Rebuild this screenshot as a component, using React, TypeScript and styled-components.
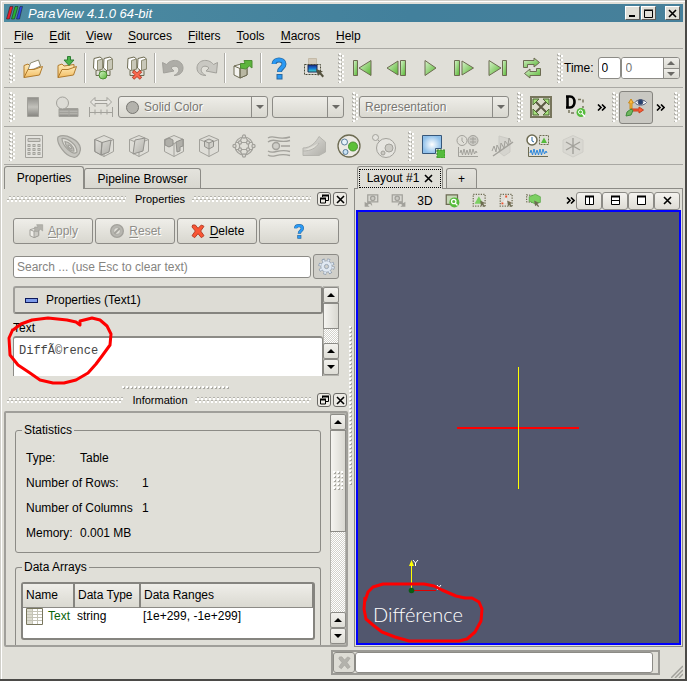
import React from 'react';
import styled, { createGlobalStyle, css } from 'styled-components';

const BG = '#e0dfd8';
const LINE = '#8c8b86';
const OLIVE = '#6d6b52';
const GREY = '#a2a19b';
const PALE = '#cbcac4';

const Global = createGlobalStyle`
  * { box-sizing: border-box; }
  body { margin: 0; background: ${BG}; }
  body, button, input, select, textarea, table {
    font-family: "Liberation Sans", Arial, sans-serif;
    font-size: 12px;
    color: #000;
  }
  button, input, select, textarea { margin: 0; padding: 0; border-radius: 0; }
`;

/* ---------- window frame ---------- */

const Window = styled.div`
  position: relative;
  display: flex;
  flex-direction: column;
  min-height: 100vh;
  padding: 4px 2px 0 4px;
  background: ${BG};
  border-right: 2px solid #4b4a47;
  border-bottom: 2px solid #4b4a47;
  box-shadow: inset 1px 1px 0 #d0cfc9, inset 2px 2px 0 #fff;
`;

const TitleBar = styled.header`
  display: flex;
  align-items: center;
  gap: 5px;
  height: 18px;
  padding: 0 3px 0 2px;
  background: linear-gradient(90deg, #4d8ba1, #42809c 60%, #47809a);
`;

const Title = styled.h1`
  flex: 1;
  margin: 0;
  font-size: 13px;
  font-weight: 400;
  font-style: italic;
  color: #fff;
  white-space: nowrap;
`;

const FrameButtons = styled.div`
  display: flex;
  gap: 1px;
  & > :last-child { margin-left: 8px; }
`;

const FrameButton = styled.button`
  width: 15px;
  height: 14px;
  display: grid;
  place-items: center;
  background: ${BG};
  border: 1px solid;
  border-color: #fff #5c5b57 #5c5b57 #fff;
`;

const MenuBar = styled.nav`
  display: flex;
  align-items: center;
  gap: 16px;
  height: 27px;
  padding: 2px 0 0 10px;
  border-bottom: 1px solid #a9a8a3;
`;

const MenuItem = styled.button`
  border: 0;
  background: none;
`;

const Mnemonic = styled.span`
  text-decoration: underline;
  text-underline-offset: 2px;
`;

/* ---------- toolbars ---------- */

const Toolbar = styled.div<{ $h?: number }>`
  display: flex;
  align-items: center;
  height: ${(p) => p.$h ?? 39}px;
  padding-left: 5px;
  border-bottom: 1px solid #a9a8a3;
  overflow: hidden;
`;

const dots = css`
  background-image:
    radial-gradient(circle at 1px 1px, #fff 1px, transparent 1px),
    radial-gradient(circle at 2px 2px, #a9a8a2 1px, transparent 1px);
  background-size: 4px 4px;
`;

const Grip = styled.span<{ $gap?: number }>`
  flex: none;
  width: 6px;
  height: 30px;
  margin-left: ${(p) => p.$gap ?? 0}px;
  margin-right: 1px;
  background-image:
    radial-gradient(circle at 2px 1px, #fff 1px, transparent 1px),
    radial-gradient(circle at 1px 2px, #b3b2ac 1px, transparent 1px),
    radial-gradient(circle at 5px 3px, #fff 1px, transparent 1px),
    radial-gradient(circle at 4px 3px, #b3b2ac 1px, transparent 1px);
  background-size: 6px 4px;
`;

const Divider = styled.span`
  width: 2px;
  height: 30px;
  background: linear-gradient(90deg, #aeada7 50%, #fff 50%);
`;

const ToolButton = styled.button<{ $w?: number; $pressed?: boolean }>`
  flex: none;
  display: grid;
  place-items: center;
  width: ${(p) => p.$w ?? 34}px;
  height: 33px;
  border: 0;
  background: none;
  ${(p) =>
    p.$pressed &&
    css`
      background: #c9c8c2;
      border: 1px solid #85847f;
      border-radius: 3px;
    `}
`;

const More = styled.button<{ $w: number }>`
  flex: none;
  display: grid;
  place-items: center;
  width: ${(p) => p.$w}px;
  border: 0;
  background: none;
`;

const ComboBox = styled.div<{ $w: number; $gap?: number }>`
  flex: 0 1 ${(p) => p.$w}px;
  height: 22px;
  margin-left: ${(p) => p.$gap ?? 0}px;
  border: 1px solid ${LINE};
  border-radius: 3px;
  background: linear-gradient(#eeede8, #d9d8d0);
  display: flex;
  align-items: center;
`;

const Select = styled.select<{ $pad: number }>`
  flex: 1;
  min-width: 0;
  height: 20px;
  padding-left: ${(p) => p.$pad}px;
  appearance: none;
  border: 0;
  background: none;
  opacity: 1;
  color: #777671;
  text-shadow: 1px 1px 0 #fff;
`;

const ComboArrow = styled.span`
  width: 16px;
  height: 20px;
  display: grid;
  place-items: center;
  border-left: 1px solid ${LINE};
`;

const ComboDot = styled.span`
  width: 13px;
  height: 13px;
  margin-left: 7px;
  border: 1px solid #777671;
  border-radius: 50%;
  background: #b3b2ac;
`;

const TimeLabel = styled.label`
  display: flex;
  align-items: center;
  gap: 4px;
`;

const field = css`
  border: 1px solid ${LINE};
  border-radius: 3px;
  background: #fff;
`;

const TimeInput = styled.input`
  ${field}
  width: 23px;
  height: 22px;
  padding-left: 3px;
`;

const SpinBox = styled.div`
  ${field}
  display: flex;
  width: 59px;
  height: 22px;
  overflow: hidden;
`;

const SpinInput = styled.input`
  flex: 1;
  min-width: 0;
  padding-left: 4px;
  border: 0;
  color: #777671;
  background: #fff;
`;

const SpinButtons = styled.div`
  width: 16px;
  display: grid;
  grid-template-rows: 1fr 1fr;
  border-left: 1px solid ${LINE};
`;

const SpinButton = styled.button`
  display: grid;
  place-items: center;
  border: 0;
  background: linear-gradient(#efeee9, #dbdad3);
  & + & { border-top: 1px solid ${LINE}; }
`;

/* ---------- body columns ---------- */

const Body = styled.main`
  flex: 1;
  display: grid;
  grid-template-columns: minmax(0, 344fr) 6px minmax(0, 329fr);
`;

const Column = styled.section`
  display: flex;
  flex-direction: column;
  min-width: 0;
`;

const ColumnSplitter = styled.div`
  align-self: center;
  justify-self: center;
  width: 4px;
  height: 160px;
  ${dots}
`;

const Tabs = styled.div`
  display: flex;
  align-items: flex-end;
  height: 24px;
  border-bottom: 1px solid ${LINE};
`;

const Tab = styled.button<{ $active?: boolean; $w: number }>`
  width: ${(p) => p.$w}px;
  height: ${(p) => (p.$active ? 23 : 20)}px;
  margin-bottom: ${(p) => (p.$active ? -1 : 0)}px;
  display: flex;
  align-items: center;
  justify-content: center;
  gap: 5px;
  border: 1px solid ${LINE};
  border-bottom: 0;
  border-radius: 3px 3px 0 0;
  background: ${(p) => (p.$active ? BG : 'linear-gradient(#e4e3dd, #d8d7d0)')};
  white-space: nowrap;
`;

const DockTitle = styled.div`
  display: flex;
  align-items: center;
  gap: 2px;
  height: 20px;
  padding: 0 1px 0 3px;
`;

const DockDots = styled.span`
  flex: 1;
  height: 6px;
  margin-right: 4px;
  background-image:
    radial-gradient(circle at 3px 2px, #fff 1px, transparent 1px),
    radial-gradient(circle at 3px 1px, #b3b2ac 1px, transparent 1px),
    radial-gradient(circle at 1px 5px, #fff 1px, transparent 1px),
    radial-gradient(circle at 1px 4px, #b3b2ac 1px, transparent 1px);
  background-size: 4px 6px;
`;

const DockName = styled.h2`
  margin: 0 5px 0 3px;
  font-size: 11px;
  font-weight: 400;
`;

const DockButton = styled.button`
  width: 14px;
  height: 14px;
  display: grid;
  place-items: center;
  border: 1px solid #6b6a66;
  border-radius: 3px;
  background: #eceae4;
`;

const PropertyPane = styled.div`
  position: relative;
  padding: 9px 9px 0;
`;

const ButtonRow = styled.div`
  display: grid;
  grid-template-columns: repeat(4, 1fr);
  gap: 2px;
`;

const PushButton = styled.button`
  display: flex;
  align-items: center;
  justify-content: center;
  gap: 4px;
  height: 26px;
  border: 1px solid ${LINE};
  border-radius: 3px;
  background: linear-gradient(#efeee9, #d8d7cf);
  &:disabled {
    color: #8f8e89;
    text-shadow: 1px 1px 0 #fff;
  }
`;

const SearchRow = styled.div`
  display: flex;
  align-items: center;
  gap: 2px;
  margin: 10px 0 7px;
`;

const SearchInput = styled.input`
  ${field}
  flex: 1;
  min-width: 0;
  height: 22px;
  padding-left: 3px;
  &::placeholder { color: #85847f; opacity: 1; }
`;

const GearButton = styled.button`
  display: grid;
  place-items: center;
  width: 26px;
  height: 25px;
  border: 1px solid ${LINE};
  border-radius: 3px;
  background: #d0cfc9;
`;

const ScrollArea = styled.div`
  display: flex;
  height: 90px;
`;

const ScrollContent = styled.div`
  flex: 1;
  min-width: 0;
  overflow: hidden;
`;

const GroupHeader = styled.button`
  display: flex;
  align-items: center;
  gap: 8px;
  width: 100%;
  height: 28px;
  padding-left: 10px;
  border: 2px solid;
  border-color: #a09f9a #85847f #85847f #a09f9a;
  border-radius: 3px;
  background: #dddcd5;
`;

const CollapseMark = styled.span`
  width: 13px;
  height: 5px;
  border: 1px solid #0e1a5c;
  background: #7d9bea;
`;

const TextLabel = styled.label`
  display: block;
  height: 22px;
  padding-top: 7px;
  line-height: 14px;
`;

const TextArea = styled.textarea`
  display: block;
  width: 100%;
  height: 70px;
  padding: 6px 5px;
  border: 1px solid ${LINE};
  border-top-width: 2px;
  border-radius: 3px;
  background: #fff;
  color: #444;
  resize: none;
  font-family: "Liberation Mono", monospace;
  overflow: hidden;
`;

const Bar = styled.div`
  flex: none;
  display: flex;
  flex-direction: column;
  width: 16px;
  border: 1px solid #b5b4ae;
  background: repeating-conic-gradient(#fff 0 25%, #d3d2cb 0 50%) 0 0 / 2px 2px;
`;

const BarButton = styled.button`
  height: 16px;
  display: grid;
  place-items: center;
  margin: 0 -1px;
  border: 1px solid ${LINE};
  border-radius: 2px;
  background: linear-gradient(#f2f1ed, #deddd6);
`;

const Thumb = styled.div<{ $h: number }>`
  display: grid;
  place-items: center;
  height: ${(p) => p.$h}px;
  margin: 0 -1px auto;
  border: 1px solid ${LINE};
  background: linear-gradient(90deg, #f5f4f0, #d9d8d1);
`;

const ThumbDots = styled.span`
  width: 10px;
  height: 20px;
  ${dots}
`;

const RowSplitter = styled.div`
  width: 108px;
  height: 4px;
  margin: 10px auto 0;
  ${dots}
`;

const InfoFrame = styled.div`
  flex: 1;
  display: flex;
  margin-top: 1px;
  border: 2px solid #a09f9a;
  border-radius: 2px;
`;

const InfoContent = styled.div`
  flex: 1;
  display: flex;
  flex-direction: column;
  gap: 7px;
  min-width: 0;
  padding: 10px 9px 0;
`;

const Group = styled.fieldset<{ $open?: boolean }>`
  min-width: 0;
  margin: 0;
  border: 1px solid ${LINE};
  border-radius: 3px;
  padding: ${(p) => (p.$open ? '8px 5px 5px' : '9px 10px 6px')};
  ${(p) => p.$open && css`flex: 1; border-bottom: 0; border-radius: 3px 3px 0 0;`}
`;

const Legend = styled.legend<{ $shift?: number }>`
  height: 14px;
  padding: 0 2px;
  margin-left: ${(p) => p.$shift ?? 0}px;
  line-height: 14px;
`;

const Stats = styled.dl`
  margin: 0;
`;

const StatRow = styled.div<{ $label: number }>`
  display: grid;
  grid-template-columns: ${(p) => p.$label}px 1fr;
  line-height: 25px;
  white-space: nowrap;
  dd { margin: 0; }
`;

const TableFrame = styled.div`
  height: 58px;
  border: 2px solid #85847f;
  border-radius: 3px;
  background: #fff;
`;

const Table = styled.table`
  width: 100%;
  border-collapse: collapse;
  table-layout: fixed;
  th {
    height: 23px;
    padding: 0 4px 0 3px;
    text-align: left;
    font-weight: 400;
    border-right: 2px solid #85847f;
    border-bottom: 1px solid ${LINE};
    background: linear-gradient(#efeee9, #dad9d1);
    white-space: nowrap;
  }
  th:last-child { border-right-width: 1px; }
  td { height: 17px; padding: 0 3px; white-space: nowrap; }
`;

const Col = styled.col<{ $w?: number }>`
  width: ${(p) => (p.$w ? `${p.$w}px` : 'auto')};
`;

const ArrayName = styled.span`
  display: flex;
  align-items: center;
  gap: 5px;
  color: #0a640a;
`;

/* ---------- render view ---------- */

const ViewTabs = styled(Tabs)`
  padding-left: 3px;
  gap: 3px;
`;

const FocusRing = styled.span`
  display: flex;
  align-items: center;
  gap: 5px;
  height: 19px;
  padding: 0 7px;
  border: 1px dotted #000;
`;

const ViewFrame = styled.div`
  flex: 1;
  display: flex;
  flex-direction: column;
  border: 1px solid ${LINE};
  border-top: 0;
  padding: 0 1px 1px;
`;

const ViewToolbar = styled.div`
  display: flex;
  align-items: center;
  height: 21px;
  padding: 2px 1px 0 0;
`;

const ViewTool = styled.button`
  flex: none;
  display: grid;
  place-items: center;
  width: 26px;
  height: 18px;
  border: 0;
  background: none;
`;

const ViewTools = styled.div`
  flex: 1;
  display: flex;
  gap: 1px;
  padding-left: 2px;
  overflow: hidden;
`;

const ViewButton = styled(ViewTool)`
  border: 1px solid ${LINE};
  border-radius: 3px;
  background: linear-gradient(#f4f3ef, #dedcd5);
`;

const Scene = styled.div`
  position: relative;
  flex: 1;
  border: 2px solid #0000fe;
  background: #52576e;
`;

const Cross = styled.svg`
  position: absolute;
  left: calc(50% - 62px);
  top: calc(50% - 61px);
`;

const Triad = styled.svg`
  position: absolute;
  left: 48px;
  bottom: 46px;
`;

const SceneText = styled.span`
  position: absolute;
  left: 15px;
  bottom: 17px;
  font-family: Lato, sans-serif;
  font-weight: 300;
  font-size: 20px;
  line-height: 24px;
  color: #fff;
`;

const SceneMark = styled.svg`
  position: absolute;
  left: 3px;
  bottom: -2px;
`;

const PaneMark = styled.svg`
  position: absolute;
  left: 0;
  top: 105px;
  pointer-events: none;
`;

/* ---------- status bar ---------- */

const StatusBar = styled.footer`
  display: flex;
  align-items: center;
  height: 32px;
  padding-bottom: 1px;
`;

const StatusBox = styled.div`
  flex: 1;
  display: flex;
  height: 25px;
  margin-left: 327px;
  padding: 0 5px 0 0;
  border: 2px solid #9b9a95;
`;

const StatusButton = styled.button`
  display: grid;
  place-items: center;
  width: 22px;
  border: 1px solid ${LINE};
  border-radius: 3px;
  background: #dddcd5;
`;

const StatusInput = styled.input`
  flex: 1;
  min-width: 0;
  border: 1px solid ${LINE};
  border-radius: 3px;
  background: #fff;
`;

const SizeGrip = styled.svg`
  align-self: flex-end;
  margin-left: 11px;
`;

/* ---------- drawings ---------- */

type IconProps = { children: React.ReactNode; size?: number };

const Icon = ({ children, size = 24 }: IconProps) => (
  <svg width={size} height={size} viewBox="0 0 24 24" fill="none" stroke={OLIVE} strokeWidth="1" aria-hidden="true">
    {children}
  </svg>
);

const Defs = styled.svg`
  position: absolute;
  width: 0;
  height: 0;
`;

const Gradients = () => (
  <Defs aria-hidden="true">
    <defs>
      <linearGradient id="green" x1="0" y1="0" x2="1" y2="1">
        <stop offset="0" stopColor="#d9f3cd" />
        <stop offset="1" stopColor="#55b52f" />
      </linearGradient>
      <linearGradient id="folder" x1="0" y1="0" x2="0" y2="1">
        <stop offset="0" stopColor="#fdeab8" />
        <stop offset="1" stopColor="#f3bd62" />
      </linearGradient>
      <linearGradient id="grey" x1="0" y1="0" x2="1" y2="1">
        <stop offset="0" stopColor="#e2e1dc" />
        <stop offset="1" stopColor="#b0afa9" />
      </linearGradient>
      <linearGradient id="map" x1="0" y1="0" x2="0" y2="1">
        <stop offset="0" stopColor="#8f8e89" />
        <stop offset="0.5" stopColor="#c2c1bb" />
        <stop offset="1" stopColor="#85847f" />
      </linearGradient>
      <radialGradient id="sky">
        <stop offset="0" stopColor="#fff" />
        <stop offset="1" stopColor="#8fc0ea" />
      </radialGradient>
      <linearGradient id="sea" x1="0" y1="0" x2="0" y2="1">
        <stop offset="0" stopColor="#1b2a8a" />
        <stop offset="0.5" stopColor="#1677d0" />
        <stop offset="1" stopColor="#3fe0c8" />
      </linearGradient>
    </defs>
  </Defs>
);

const folderBack = <path d="M3 21.500V9.500L7 8L9 10L19 8.500V13" fill="url(#folder)" stroke="#b07a2c" />;
const folderFront = <path d="M3 21.500L7 13.500L13 13.500L21.500 10.500L18.500 19Z" fill="url(#folder)" stroke="#b07a2c" />;

const servers = (
  <>
    <path d="M3 2.500L9 1L11.500 3V13L5 14.500L2.500 12Z" fill="#fff" />
    <path d="M6.500 4.500L11.500 3V13L6.500 14.500Z" fill="#c9c8b8" stroke="#8d8b72" />
    <path d="M13 2.500L19 1L21.500 3V13L15.500 14.500L12.500 12Z" fill="#fff" />
    <path d="M16.500 4.500L21.500 3V13L16.500 14.500Z" fill="#c9c8b8" stroke="#8d8b72" />
    <path d="M5 14.500V19.500H9M19 14.500V19.500H15M9 14V17M15.500 14V17" />
  </>
);

const cube = (
  <path d="M12 1.500L21.500 5.500V17.500L12 22.500L2.500 17.500V5.500ZM2.500 5.500L12 9.500L21.500 5.500M12 9.500V22.500" stroke={GREY} fill="#deddd7" />
);

const wave = (colour: string) => (
  <path d="M4 19L5 16L6.500 21L8 15L9.500 21L11 16L12.500 21L14 15L15.500 21L17 15L18.500 20L20 17L21 19" stroke={colour} />
);

const Cursor = () => <path d="M13 12L21 16L18 17L21 21L19.500 22.500L16.500 19L14.500 21Z" fill={OLIVE} stroke="none" />;

const crossShape = 'M4 3L8 3L12 8L17 3L21 5L16 12L21 19L17 22L12 16L7 22L3 19L8 12L3 6Z';

const icons = {
  open: (
    <>
      {folderBack}
      <path d="M7 14L9.500 7L17.500 4L19.500 10L13 13Z" fill="#fff" stroke="#8d8b72" />
      {folderFront}
    </>
  ),
  save: (
    <>
      {folderBack}
      {folderFront}
      <path d="M12.500 0.500H15.500V4H19L14 9.500L9 4H12.500Z" fill="#4cb34a" stroke="#2f7f35" />
    </>
  ),
  connect: (
    <>
      {servers}
      <circle cx="12" cy="19" r="4" fill="url(#green)" stroke="#4c8f33" />
    </>
  ),
  disconnect: (
    <>
      {servers}
      <path d="M8 15L16 22.500M16 15L8 22.500" stroke="#b3402a" strokeWidth="3.400" />
      <path d="M8.500 15.500L15.500 22M15.500 15.500L8.500 22" stroke="#fb6a50" strokeWidth="2" />
    </>
  ),
  undo: <path d="M1.500 6.500L5.500 8.500C11 1.500 22 4 22 12C22 17 18 19.500 13 19.500C17 17.500 18.500 15 17.500 12.500C16.500 9.500 12 9.500 10 12L13 15L2.500 17Z" fill="#aeada7" stroke={GREY} />,
  redo: <path d="M22.500 6.500L18.500 8.500C13 1.500 2 4 2 12C2 17 6 19.500 11 19.500C7 17.500 5.500 15 6.500 12.500C7.500 9.500 12 9.500 14 12L11 15L21.500 17Z" fill="#c9c8c2" stroke={GREY} />,
  apply: (
    <>
      <path d="M3 10L10 8L16 10V19L9 22L3 19Z" fill="#f4f3ef" />
      <path d="M9 12.500L16 10V19L9 22Z" fill="#b9b7a2" />
      <path d="M3 10L9 12.500V22" />
      <path d="M9.500 12V7.500H14L13 4.500H21V12L18.500 10L14.500 13Z" fill="#5cb43c" stroke="#4c8f33" />
    </>
  ),
  applyOff: (
    <>
      <path d="M3 10L10 8L16 10V19L9 22L3 19Z" fill="#efeee9" stroke={GREY} strokeWidth="1.500" />
      <path d="M9 12.500L16 10V19L9 22ZM3 10L9 12.500" fill={PALE} stroke={GREY} strokeWidth="1.500" />
      <path d="M10 12V6H15L13 2.500H22V12L19 9.500L14 13Z" fill="#b3b2ac" stroke={GREY} />
    </>
  ),
  help: (
    <>
      <path d="M7 8C7 2.500 17 2.500 17 8C17 12 12.500 11.500 12.500 16" stroke="#29699f" strokeWidth="5" />
      <path d="M7 8C7 2.500 17 2.500 17 8C17 12 12.500 11.500 12.500 15.500" stroke="#2a99f4" strokeWidth="3.400" />
      <rect x="10" y="18.500" width="5" height="4.500" fill="#2a99f4" stroke="#29699f" />
    </>
  ),
  colormap: (
    <>
      <path d="M7.500 2.500H15.500V9H7.500Z" fill="#d5cab9" stroke="#c4bba8" />
      <path d="M7 9H16V16H7Z" fill="url(#sea)" stroke="#1b2a5a" />
      <path d="M3.500 8.500H19.500V18.500H3.500Z" strokeDasharray="2 1" stroke="#4b4a3a" />
      <path d="M15 13L22 15.500L20 16.500L23 20L21.500 21.500L18.500 18L17 20Z" fill="#55533f" stroke="none" />
    </>
  ),
  first: (
    <>
      <path d="M3.500 4.500H7.500V19.500H3.500Z" fill="url(#green)" />
      <path d="M21 4.500V19.500L9 12Z" fill="url(#green)" />
    </>
  ),
  prev: (
    <>
      <path d="M14 5V19L3 12Z" fill="url(#green)" />
      <path d="M16.500 4.500H21.500V19.500H16.500Z" fill="url(#green)" />
    </>
  ),
  play: <path d="M7 4.500V19.500L18 12Z" fill="url(#green)" />,
  next: (
    <>
      <path d="M2.500 4.500H7.500V19.500H2.500Z" fill="url(#green)" />
      <path d="M10 5V19L21.500 12Z" fill="url(#green)" />
    </>
  ),
  last: (
    <>
      <path d="M3 4.500V19.500L15 12Z" fill="url(#green)" />
      <path d="M16.500 4.500H20.500V19.500H16.500Z" fill="url(#green)" />
    </>
  ),
  loop: (
    <>
      <path d="M3.500 11.500V4.500H14V2L19.500 6.500L14 11V8.500H7.500V11.500Z" fill="url(#green)" />
      <path d="M20.500 12.500V19.500H10V22L4.500 17.500L10 13V15.500H16.500V12.500Z" fill="url(#green)" />
    </>
  ),
  palette: <path d="M6.500 2.500H17.500V21.500H6.500Z" fill="url(#map)" stroke={GREY} />,
  edit: (
    <>
      <path d="M4 13.500H23V21.500H4Z" fill="url(#map)" stroke={GREY} />
      <path d="M4 17.500H23M14 13.500V21.500" stroke={GREY} />
      <circle cx="7.500" cy="8" r="6" fill="#dddcd6" stroke={GREY} />
    </>
  ),
  rescale: (
    <>
      <path d="M1.500 7L6 2.500V5.500H18V2.500L22.500 7L18 11.500V8.500H6V11.500Z" stroke={GREY} fill="#e7e6e1" />
      <path d="M0.500 12V22M23.500 12V22M0.500 17.500H23.500M6 14.500V19.500M12 14.500V19.500M18 14.500V19.500" stroke={GREY} />
    </>
  ),
  resetCamera: (
    <>
      <path d="M2 2H22V22H2Z" stroke="#77755c" strokeWidth="2" fill="#dcdbcc" />
      <path d="M5 5L19 19M19 5L5 19" stroke="#5c5a44" strokeWidth="2" />
      <path d="M4 4H10L4 10ZM20 4V10L14 4ZM4 20V14L10 20ZM20 20H14L20 14Z" fill="#a5e07d" stroke="#4f6b34" />
    </>
  ),
  zoomData: (
    <>
      <path d="M3 1.500H7C13 1.500 13 12.500 7 12.500H3M4.500 1.500V12.500" stroke="#000" strokeWidth="2.600" />
      <path d="M15 4.500H20V8M6 15V18H12M20 11V13" stroke="#77755c" strokeWidth="1.500" strokeDasharray="3 2" />
      <circle cx="18" cy="17.500" r="4.500" fill="#55bb3c" stroke="none" />
      <circle cx="17.500" cy="17" r="2" stroke="#fff" />
      <path d="M19 18.500L22 21.500" stroke="#fff" strokeWidth="1.500" />
    </>
  ),
  axes: (
    <>
      <path d="M6 14V8H4.500L7 4L9.500 8H8V14Z" fill="#fbb83c" stroke="#c98a1c" />
      <path d="M7 14H15V12L19.500 15L15 18V16H7Z" fill="#fb5a34" stroke="#c8401e" />
      <path d="M7 14L3 17L2 21L7 20L9 15.500Z" fill="#6fb65e" stroke="#3f8a3c" />
      <path d="M11 7.500C13 4 20 4 22.500 7.500C20 11 13 11 11 7.500Z" fill="#fff" stroke="#4b5878" />
      <circle cx="16.500" cy="7" r="2.500" fill="#26406e" stroke="#4b5878" />
    </>
  ),
  calculator: (
    <g stroke={GREY}>
      <path d="M3.500 1.500H20.500V23.500H3.500Z" fill="#e3e2dd" />
      <path d="M6 4.500H18V7.500H6Z" fill="#d0cfc9" />
      {[11, 15, 19].map((y) => [6, 11, 16].map((x) => <rect key={`${x}-${y}`} x={x} y={y - 0.5} width="2" height="2" fill="#c4c3bd" />))}
    </g>
  ),
  contour: (
    <g stroke={GREY} strokeWidth="1.200">
      <path d="M1 3C8 -1 23 6 23.500 15C23 22 18 24 16 23C8 22 -1 9 1 3Z" fill="#c6c5bf" />
      <path d="M5 4.500C10 4 20 10 20 18C16 22 5 12 5 4.500Z" fill="#e0dfd9" />
      <path d="M8 7.500C12 8 17 12 17 17C14 18 8 12 8 7.500Z" fill="#c6c5bf" />
      <path d="M11 11C13 11 15 13 15 15C13 15 11 13 11 11Z" fill="#e6e5e0" />
    </g>
  ),
  clip: (
    <>
      {cube}
      <path d="M3 5.500L10 8.500L9 21L3 17.500ZM10 8.500L19 6L17 18L9 21Z" fill="url(#grey)" stroke="#92918c" />
    </>
  ),
  slice: (
    <>
      {cube}
      <path d="M8 6L18 4L16 17L6 20Z" fill="url(#grey)" stroke="#92918c" />
    </>
  ),
  threshold: (
    <>
      {cube}
      <path d="M3 6L7 4L11 6V11L7 13L3 11ZM14 8L21 5V12L18 13V17L15 18Z" fill="#b0afa9" stroke="#92918c" />
    </>
  ),
  extract: (
    <>
      {cube}
      <path d="M7.500 7L12 5L16.500 7V12.500L12 15L7.500 12.500ZM7.500 7L12 9L16.500 7M12 9V15" fill="#cfcec8" stroke="#92918c" />
    </>
  ),
  glyph: (
    <g stroke={GREY} strokeWidth="1.200">
      <circle cx="12" cy="12" r="9" />
      <ellipse cx="12" cy="12" rx="4.500" ry="9" />
      <path d="M4 8.500H20M4 15.500H20" />
      {[[12, 2.5], [12, 21.5], [2.5, 12], [21.5, 12], [8, 8.5], [16, 8.5], [8, 15.5], [16, 15.5]].map(([x, y]) => (
        <circle key={`${x}-${y}`} cx={x} cy={y} r="1.600" fill="#dddcd6" />
      ))}
    </g>
  ),
  stream: (
    <g stroke={GREY} strokeWidth="1.400">
      <path d="M1 4C7 0 10 7 23 3M1 8C7 3 11 10 23 6.500M1 17C7 21 11 14 23 17.500M1 21C7 25 10 18 23 21.500M14 12H23" />
      <circle cx="9" cy="12" r="3.500" fill="#cfcec8" />
    </g>
  ),
  warp: <path d="M1 14C9 14 14 8 17 2.500L23.500 8V18L17 21.500H1ZM1 17C9 17 14 14 17 9" fill="url(#grey)" stroke="#b5b4ae" />,
  group: (
    <>
      <circle cx="12" cy="12" r="11" fill="#eceae4" strokeWidth="1.300" />
      <circle cx="16" cy="12.500" r="4.500" fill="#5cc038" stroke="#4c8f33" />
      <circle cx="7.500" cy="8" r="3" fill="#e6f1fa" stroke="#5c7f9b" />
      <circle cx="8.500" cy="18" r="2.500" fill="#c9e2f5" stroke="#5c7f9b" />
    </>
  ),
  ungroup: (
    <g stroke={GREY}>
      <circle cx="14" cy="14" r="9.500" fill="#e5e4df" />
      <circle cx="17" cy="14" r="4" fill={PALE} />
      <circle cx="11" cy="19" r="2" fill={PALE} />
      <circle cx="3.500" cy="3.500" r="3" fill="#e5e4df" />
      <path d="M6 6L8 8" />
    </g>
  ),
  selectView: (
    <>
      <path d="M1.500 1.500H20.500V14.500H14.500V19.500H1.500Z" fill="url(#sky)" stroke="#37577a" />
      <path d="M16 16H24V24H16Z" fill="#55bb3c" stroke="#3d8a2a" strokeDasharray="2 1" />
    </>
  ),
  timePlot: (
    <g stroke={GREY}>
      <circle cx="6" cy="6.500" r="5" />
      <path d="M6 3.500V7L8 9M2.500 13V22.500H22" />
      <circle cx="17" cy="6.500" r="5" fill={PALE} />
      <path d="M14 5H20M14 8H20M17 3V10" />
      {wave(GREY)}
    </g>
  ),
  linePlot: (
    <g stroke={GREY}>
      <path d="M8 2L19 5V18L13 22L8 18Z" fill="#d5d4ce" stroke={PALE} />
      <path d="M2 22L22 8" strokeWidth="1.500" />
      <path d="M1 17L3 12L5 18L6 11L9 17L10 9L13 14L14 7L17 11L18 4L20 8" />
    </g>
  ),
  selectionPlot: (
    <>
      <circle cx="6" cy="6" r="5" fill="#fff" strokeWidth="1.500" />
      <path d="M6 3V7L8 8" stroke="#29699f" />
      <path d="M13.500 1.500H22.500V10.500H13.500Z" strokeDasharray="2 1" />
      <path d="M18 3.500L21 9H15Z" fill="#55bb3c" stroke="none" />
      {wave('#2a86dc')}
      <path d="M2.500 13V22.500H22" />
    </>
  ),
  snow: (
    <g stroke="#b5b4ae">
      <path d="M12 1.500L22 6V18L12 23L2 18V6Z" fill="#d9d8d2" stroke="#cfcec8" />
      <path d="M12 4V20M5 8L19 16M19 8L5 16" strokeWidth="1.400" stroke={GREY} />
    </g>
  ),
  cameraBack: (
    <g stroke={GREY} strokeWidth="2">
      <path d="M6 3H22V14H6Z" fill="#d9d8d2" />
      <circle cx="14" cy="8.500" r="3.500" fill={PALE} />
      <path d="M1 22V14L4 16C8 12 14 15 13 21C11 17 8 17 6 19L9 22Z" fill={GREY} stroke="none" />
    </g>
  ),
  cameraNext: (
    <g stroke={GREY} strokeWidth="2">
      <path d="M2 3H18V14H2Z" fill="#d9d8d2" />
      <circle cx="10" cy="8.500" r="3.500" fill={PALE} />
      <path d="M23 22V14L20 16C16 12 10 15 11 21C13 17 16 17 18 19L15 22Z" fill={GREY} stroke="none" />
    </g>
  ),
  zoomBox: (
    <>
      <path d="M2 3H20V18H2Z" fill="#c7d8b8" strokeWidth="2" />
      <circle cx="15" cy="15" r="8" fill="#55bb3c" stroke="none" />
      <circle cx="14" cy="13.500" r="3.500" stroke="#fff" strokeWidth="2" />
      <path d="M16 16L20 20" stroke="#fff" strokeWidth="2" />
    </>
  ),
  selectCells: (
    <>
      <path d="M2 2H21V21H2Z" strokeDasharray="2 2" strokeWidth="2" />
      <path d="M11 5L18 17H4Z" fill="#7ccf62" stroke="none" />
      <Cursor />
    </>
  ),
  selectPoints: (
    <>
      <path d="M2 2H21V21H2Z" strokeDasharray="2 2" strokeWidth="2" />
      <path d="M11 6L18 17H4Z" fill="#eceae4" stroke="#d5d4ce" />
      <path d="M10 4H13V7H10ZM4 15H7V18H4ZM15 14H18V17H15Z" fill="#f0522f" stroke="none" />
      <Cursor />
    </>
  ),
  selectFrustum: (
    <>
      <path d="M1 3L20 5V16L1 14Z" strokeDasharray="2 2" strokeWidth="2" />
      <path d="M5 6L15 2L23 6V15L14 17L5 13Z" fill="#7ccf62" stroke="#4c9f3b" />
      <Cursor />
    </>
  ),
  reset: (
    <>
      <circle cx="12" cy="12" r="9.500" fill="#b7b6b0" stroke={GREY} strokeWidth="2" />
      <circle cx="12" cy="12" r="5" fill="#e0dfd9" stroke={GREY} />
      <path d="M8 16L16 8" stroke={GREY} strokeWidth="3" />
    </>
  ),
  remove: <path d={crossShape} fill="#fa5534" stroke="#b5402a" strokeWidth="1.500" />,
  removeOff: <path d={crossShape} fill="#b3b2ac" stroke={GREY} />,
  gear: (
    <>
      <circle cx="12" cy="12" r="9" stroke="#8595a8" strokeWidth="5" strokeDasharray="3.600 3.470" />
      <circle cx="12" cy="12" r="8" fill="#e1e9f2" stroke="#8595a8" />
      <circle cx="12" cy="12" r="9" stroke="#e1e9f2" strokeWidth="3" strokeDasharray="2.600 4.470" strokeDashoffset="-0.500" />
      <circle cx="12" cy="12" r="3" fill="#cfd0cd" stroke="#8595a8" />
    </>
  ),
};

type IconName = keyof typeof icons;

const Cross9 = () => (
  <svg width="9" height="9" viewBox="0 0 9 9" stroke="#000" strokeWidth="1.600" aria-hidden="true">
    <path d="M1 1L8 8M8 1L1 8" />
  </svg>
);

const Chevrons = () => (
  <svg width="9" height="7" viewBox="0 0 9 7" fill="none" stroke="#000" strokeWidth="1.600" aria-hidden="true">
    <path d="M1 0.500L4 3.500L1 6.500M5 0.500L8 3.500L5 6.500" />
  </svg>
);

const Arrow = ({ up, colour = '#000' }: { up?: boolean; colour?: string }) => (
  <svg width="8" height="4" viewBox="0 0 8 4" fill={colour} aria-hidden="true">
    <path d={up ? 'M0 4L4 0L8 4Z' : 'M0 0L4 4L8 0Z'} />
  </svg>
);

const FloatMark = () => (
  <svg width="10" height="10" viewBox="0 0 10 10" fill="none" stroke="#000" aria-hidden="true">
    <path d="M3.500 3V1.500H9.500V6.500H7" />
    <path d="M3 1.500H10M1 4.500H7" strokeWidth="2" />
    <path d="M1.500 4.500H6.500V9H1.500Z" />
  </svg>
);

const Logo = () => (
  <svg width="17" height="14" viewBox="0 0 17 14" stroke="#1a1a1a" strokeWidth="0.500" aria-hidden="true">
    <path d="M4 0.500H7L3.500 13H0.500Z" fill="#e8202c" />
    <path d="M9 0.500H12L8.500 13H5.500Z" fill="#25b432" />
    <path d="M14 0.500H16.500L13.500 13H10.500Z" fill="#2b45e0" />
  </svg>
);

const SplitMark = ({ d }: { d: string }) => (
  <svg width="11" height="11" viewBox="0 0 11 11" fill="#fff" stroke="#000" aria-hidden="true">
    <path d={d} />
    <path d="M1 1.500H10" strokeWidth="2" />
  </svg>
);

const ArrayMark = () => (
  <svg width="17" height="17" viewBox="0 0 17 17" fill="#fff" stroke="#77755c" aria-hidden="true">
    <path d="M0.500 0.500H16.500V16.500H0.500Z" />
    <path d="M1 1H6V16H1Z" fill="#dcdbcf" stroke="none" />
    <path d="M1 3.500H16M1 6.500H16M1 9.500H16M1 12.500H16M6.500 1V16M11.500 1V16" stroke="#c4c3b6" />
  </svg>
);

/* ---------- parts ---------- */

const Tool = ({ name, label, w, pressed }: { name: IconName; label: string; w?: number; pressed?: boolean }) => (
  <ToolButton $w={w} $pressed={pressed} aria-label={label} aria-pressed={pressed}>
    <Icon>{icons[name]}</Icon>
  </ToolButton>
);

const MoreButton = ({ w, label }: { w: number; label: string }) => (
  <More $w={w} aria-label={label}>
    <Chevrons />
  </More>
);

const Combo = ({ w, gap, label, text, dot }: { w: number; gap?: number; label: string; text: string; dot?: boolean }) => (
  <ComboBox $w={w} $gap={gap}>
    {dot && <ComboDot />}
    <Select $pad={5} disabled aria-label={label}>
      <option>{text}</option>
    </Select>
    <ComboArrow>
      <Arrow colour="#6b6a66" />
    </ComboArrow>
  </ComboBox>
);

const Key = ({ text }: { text: string }) => (
  <span>
    <Mnemonic>{text[0]}</Mnemonic>
    {text.slice(1)}
  </span>
);

const Dock = ({ name }: { name: string }) => (
  <DockTitle>
    <DockDots />
    <DockName>{name}</DockName>
    <DockDots />
    <DockButton aria-label={`Float ${name}`}>
      <FloatMark />
    </DockButton>
    <DockButton aria-label={`Close ${name}`}>
      <Cross9 />
    </DockButton>
  </DockTitle>
);

const ScrollBar = ({ thumb, grip }: { thumb: number; grip?: boolean }) => (
  <Bar>
    <BarButton aria-label="Scroll up"><Arrow up /></BarButton>
    <Thumb $h={thumb}>{grip && <ThumbDots />}</Thumb>
    <BarButton aria-label="Scroll page up"><Arrow up /></BarButton>
    <BarButton aria-label="Scroll down"><Arrow /></BarButton>
  </Bar>
);

const menus = ['File', 'Edit', 'View', 'Sources', 'Filters', 'Tools', 'Macros', 'Help'];

const filters: [IconName, string][] = [
  ['calculator', 'Calculator'], ['contour', 'Contour'], ['clip', 'Clip'], ['slice', 'Slice'],
  ['threshold', 'Threshold'], ['extract', 'Extract Subset'], ['glyph', 'Glyph'], ['stream', 'Stream Tracer'],
  ['warp', 'Warp'], ['group', 'Group Datasets'], ['ungroup', 'Extract Level'],
];

const plots: [IconName, string][] = [
  ['selectView', 'Extract Selection'], ['timePlot', 'Plot Global Variables'], ['linePlot', 'Plot Over Line'],
  ['selectionPlot', 'Plot Selection Over Time'], ['snow', 'Probe'],
];

const stats: [string, string, number][] = [
  ['Type:', 'Table', 54],
  ['Number of Rows:', '1', 116],
  ['Number of Columns', '1', 116],
  ['Memory:', '0.001 MB', 54],
];

export default function App() {
  return (
    <Window>
      <Global />
      <Gradients />
      <TitleBar>
        <Logo />
        <Title>ParaView 4.1.0 64-bit</Title>
        <FrameButtons>
          <FrameButton aria-label="Minimize">
            <svg width="9" height="9" aria-hidden="true"><path d="M1 7H7" stroke="#000" strokeWidth="2" /></svg>
          </FrameButton>
          <FrameButton aria-label="Maximize">
            <svg width="9" height="9" fill="none" stroke="#000" aria-hidden="true"><path d="M0.500 1.500H8.500V8.500H0.500ZM0 1H9" /></svg>
          </FrameButton>
          <FrameButton aria-label="Close"><Cross9 /></FrameButton>
        </FrameButtons>
      </TitleBar>

      <MenuBar>
        {menus.map((m) => (
          <MenuItem key={m}><Key text={m} /></MenuItem>
        ))}
      </MenuBar>

      <Toolbar>
        <Grip />
        <Tool name="open" label="Open" />
        <Tool name="save" label="Save Data" />
        <Divider />
        <Tool name="connect" label="Connect" />
        <Tool name="disconnect" label="Disconnect" />
        <Divider />
        <Tool name="undo" label="Undo" />
        <Tool name="redo" label="Redo" />
        <Divider />
        <Tool name="apply" label="Auto Apply" />
        <Divider />
        <Tool name="help" label="Help" />
        <Tool name="colormap" label="Find Data" />
        <Grip $gap={8} />
        <Tool name="first" label="First Frame" />
        <Tool name="prev" label="Previous Frame" />
        <Tool name="play" label="Play" />
        <Tool name="next" label="Next Frame" />
        <Tool name="last" label="Last Frame" />
        <Tool name="loop" label="Loop" />
        <Grip $gap={8} />
        <TimeLabel>
          Time:
          <TimeInput defaultValue="0" />
        </TimeLabel>
        <SpinBox>
          <SpinInput defaultValue="0" aria-label="Time step" />
          <SpinButtons>
            <SpinButton aria-label="Step up"><Arrow up colour="#6b6a66" /></SpinButton>
            <SpinButton aria-label="Step down"><Arrow colour="#6b6a66" /></SpinButton>
          </SpinButtons>
        </SpinBox>
      </Toolbar>

      <Toolbar>
        <Grip />
        <Tool name="palette" label="Colour Legend" />
        <Tool name="edit" label="Edit Colour Map" />
        <Tool name="rescale" label="Rescale" />
        <Combo w={150} label="Colour by" text="Solid Color" dot />
        <Combo w={72} gap={4} label="Component" text="" />
        <Grip $gap={8} />
        <Combo w={150} label="Representation" text="Representation" />
        <Grip $gap={8} />
        <Tool name="resetCamera" label="Reset Camera" />
        <Tool name="zoomData" label="Zoom To Data" />
        <MoreButton w={18} label="More camera tools" />
        <Grip $gap={2} />
        <Tool name="axes" label="Orientation Axes" pressed />
        <MoreButton w={14} label="More axes tools" />
        <Grip $gap={7} />
      </Toolbar>

      <Toolbar $h={38}>
        <Grip />
        {filters.map(([name, label]) => (
          <Tool key={name} name={name} label={label} w={35} />
        ))}
        <Grip $gap={7} />
        {plots.map(([name, label]) => (
          <Tool key={name} name={name} label={label} w={35} />
        ))}
      </Toolbar>

      <Body>
        <Column>
          <Tabs>
            <Tab $active $w={80}>Properties</Tab>
            <Tab $w={117}>Pipeline Browser</Tab>
          </Tabs>
          <Dock name="Properties" />
          <PropertyPane>
            <ButtonRow>
              <PushButton disabled><Icon size={16}>{icons.applyOff}</Icon><Key text="Apply" /></PushButton>
              <PushButton disabled><Icon size={16}>{icons.reset}</Icon><Key text="Reset" /></PushButton>
              <PushButton><Icon size={16}>{icons.remove}</Icon><Key text="Delete" /></PushButton>
              <PushButton aria-label="Help"><Icon size={16}>{icons.help}</Icon></PushButton>
            </ButtonRow>
            <SearchRow>
              <SearchInput placeholder="Search ... (use Esc to clear text)" aria-label="Search properties" />
              <GearButton aria-label="Advanced properties"><Icon size={17}>{icons.gear}</Icon></GearButton>
            </SearchRow>
            <ScrollArea>
              <ScrollContent>
                <GroupHeader><CollapseMark />Properties (Text1)</GroupHeader>
                <TextLabel htmlFor="source-text">Text</TextLabel>
                <TextArea id="source-text" defaultValue="DiffÃ©rence" spellCheck={false} />
              </ScrollContent>
              <ScrollBar thumb={26} />
            </ScrollArea>
            <PaneMark width="116" height="72" fill="none" stroke="#fe0000" strokeWidth="3" strokeLinejoin="round" aria-hidden="true">
              <path d="M9 16L17 10L28 6L44 4L63 6L72 8L76 11V7L88 4L96 6L103 12L107 20L106 31L98 42L92 50L84 59L72 66L60 69H49L36 66L26 59L14 51L6 41L5 24L9 15" />
            </PaneMark>
          </PropertyPane>
          <RowSplitter />
          <Dock name="Information" />
          <InfoFrame>
            <InfoContent>
              <Group>
                <Legend $shift={-4}>Statistics</Legend>
                <Stats>
                  {stats.map(([label, value, width]) => (
                    <StatRow key={label} $label={width}>
                      <dt>{label}</dt>
                      <dd>{value}</dd>
                    </StatRow>
                  ))}
                </Stats>
              </Group>
              <Group $open>
                <Legend $shift={1}>Data Arrays</Legend>
                <TableFrame>
                  <Table>
                    <colgroup>
                      <Col $w={51} />
                      <Col $w={66} />
                      <Col />
                    </colgroup>
                    <thead>
                      <tr><th>Name</th><th>Data Type</th><th>Data Ranges</th></tr>
                    </thead>
                    <tbody>
                      <tr>
                        <td><ArrayName><ArrayMark />Text</ArrayName></td>
                        <td>string</td>
                        <td>[1e+299, -1e+299]</td>
                      </tr>
                    </tbody>
                  </Table>
                </TableFrame>
              </Group>
            </InfoContent>
            <ScrollBar thumb={102} grip />
          </InfoFrame>
        </Column>

        <ColumnSplitter />

        <Column>
          <ViewTabs>
            <Tab $active $w={86}><FocusRing>Layout #1 <Cross9 /></FocusRing></Tab>
            <Tab $w={31} aria-label="New layout">+</Tab>
          </ViewTabs>
          <ViewFrame>
            <ViewToolbar>
              <ViewTools>
                <ViewTool aria-label="Camera undo"><Icon size={15}>{icons.cameraBack}</Icon></ViewTool>
                <ViewTool aria-label="Camera redo"><Icon size={15}>{icons.cameraNext}</Icon></ViewTool>
                <ViewTool>3D</ViewTool>
                <ViewTool aria-label="Zoom to box"><Icon size={15}>{icons.zoomBox}</Icon></ViewTool>
                <ViewTool aria-label="Select cells"><Icon size={15}>{icons.selectCells}</Icon></ViewTool>
                <ViewTool aria-label="Select points"><Icon size={15}>{icons.selectPoints}</Icon></ViewTool>
                <ViewTool aria-label="Select through"><Icon size={15}>{icons.selectFrustum}</Icon></ViewTool>
              </ViewTools>
              <MoreButton w={12} label="More view tools" />
              <ViewButton aria-label="Split horizontal"><SplitMark d="M1.500 1.500H9.500V9.500H1.500ZM5.500 1V10" /></ViewButton>
              <ViewButton aria-label="Split vertical"><SplitMark d="M1.500 1.500H9.500V9.500H1.500ZM1 5.500H10" /></ViewButton>
              <ViewButton aria-label="Maximize view"><SplitMark d="M1.500 1.500H9.500V9.500H1.500Z" /></ViewButton>
              <ViewButton aria-label="Close view"><Cross9 /></ViewButton>
            </ViewToolbar>
            <Scene>
              <Cross width="123" height="123" shapeRendering="crispEdges" aria-hidden="true">
                <path d="M0 61H122" stroke="#fe0000" strokeWidth="2" />
                <path d="M61.500 0V122" stroke="#ffff00" strokeWidth="1" />
              </Cross>
              <Triad width="40" height="44" viewBox="0 0 40 44" aria-hidden="true">
                <path d="M5.500 37V10" stroke="#ffff00" />
                <path d="M5.500 7L8 13H3Z" fill="#ffff00" />
                <path d="M6 37.500H30" stroke="#e00000" />
                <circle cx="5.500" cy="37.500" r="2.800" fill="#0a5c14" />
                <path d="M7 7L9.500 10V13M12 7L9.500 10M8 30.500H12M31 32L35 37M35 32L31 37" stroke="#fff" fill="none" />
              </Triad>
              <SceneText>Différence</SceneText>
              <SceneMark width="124" height="66" fill="none" stroke="#fe0000" strokeWidth="3" strokeLinejoin="round" aria-hidden="true">
                <path d="M4 22L7 13L12 8L22 5H63L73 7L81 11L95 17L104 19H111L118 23L121 30L120 42L114 53L106 60L98 62H48L34 58L21 53L12 46L5 40L3 30L4 18" />
              </SceneMark>
            </Scene>
          </ViewFrame>
        </Column>
      </Body>

      <StatusBar>
        <StatusBox>
          <StatusButton aria-label="Abort" disabled><Icon size={15}>{icons.removeOff}</Icon></StatusButton>
          <StatusInput aria-label="Progress" readOnly />
        </StatusBox>
        <SizeGrip width="12" height="13" aria-hidden="true">
          <path d="M0 13L12 1M4 13L12 5M8 13L12 9" stroke="#a2a19b" strokeWidth="1.500" />
        </SizeGrip>
      </StatusBar>
    </Window>
  );
}
